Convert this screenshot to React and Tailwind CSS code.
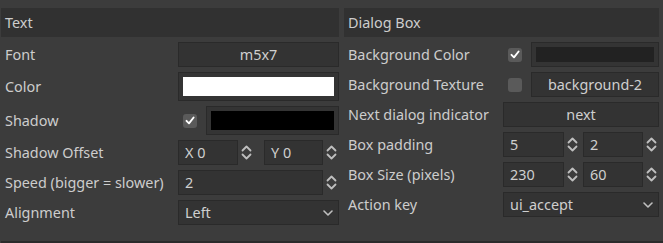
import React from 'react';

const font = { fontFamily: '"Noto Sans", "Open Sans", sans-serif' };

const Arrows = () => (
  <div className="w-[16px] h-full flex items-center justify-center">
    <svg width="11" height="15" viewBox="0 0 11 15" fill="none">
      <path d="M1.5 5.5 L5.5 1.5 L9.5 5.5" stroke="#bfbfbf" strokeWidth="1.8" strokeLinecap="round" strokeLinejoin="round" />
      <path d="M1.5 9.5 L5.5 13.5 L9.5 9.5" stroke="#bfbfbf" strokeWidth="1.8" strokeLinecap="round" strokeLinejoin="round" />
    </svg>
  </div>
);

const Spin = ({ value, width }) => (
  <div className="flex h-[25px]" style={{ width }}>
    <div className="flex-1 flex items-center pl-[6px] bg-[#333333] border border-[#2a2a2a] text-[#cfcfcf]">{value}</div>
    <Arrows />
  </div>
);

const Field = ({ children, center }) => (
  <div className={`h-[25px] w-full flex items-center bg-[#333333] border border-[#2a2a2a] text-[#cfcfcf] ${center ? 'justify-center' : 'pl-[6px]'}`}>
    {children}
  </div>
);

const Select = ({ value }) => (
  <div className="h-[25px] w-full flex items-center justify-between pl-[6px] pr-[5px] bg-[#333333] border border-[#2a2a2a] text-[#cfcfcf]">
    <span>{value}</span>
    <svg width="10" height="6" viewBox="0 0 10 6" fill="none">
      <path d="M1 1 L5 5 L9 1" stroke="#bfbfbf" strokeWidth="1.6" strokeLinecap="round" strokeLinejoin="round" />
    </svg>
  </div>
);

const Check = ({ checked }) => (
  <div className="w-[14px] h-[14px] rounded-[3px] bg-[#5a5a5a] flex items-center justify-center">
    {checked && (
      <svg width="10" height="9" viewBox="0 0 10 9" fill="none">
        <path d="M1.5 4.8 L4 7.3 L8.6 1.5" stroke="#ffffff" strokeWidth="1.9" strokeLinecap="round" strokeLinejoin="round" />
      </svg>
    )}
  </div>
);

const ColorBox = ({ color, h }) => (
  <div className={`flex-1 ${h} p-[4px] bg-[#343434] border border-[#2a2a2a]`}>
    <div className="w-full h-full" style={{ background: color }} />
  </div>
);

const Row = ({ label, labelW, children, h = 'h-[25px]' }) => (
  <div className={`flex items-center ${h}`}>
    <div className="shrink-0 pl-[4px] text-[#cdcdcd] whitespace-nowrap" style={{ width: labelW }}>{label}</div>
    <div className="flex-1 flex items-center h-full">{children}</div>
  </div>
);

const Header = ({ title }) => (
  <div className="h-[29px] bg-[#313131] flex items-center pl-[4px] text-[#cdcdcd]">{title}</div>
);

export default function App() {
  return (
    <div className="w-[663px] h-[243px] bg-[#3c3c3c] flex flex-col text-[14.4px]" style={font}>
      <div className="flex-1 flex gap-[5px] pt-[8px] pl-[1px] pr-[4px]">
        <div className="w-[338px] flex flex-col gap-[5px]">
          <Header title="Text" />
          <Row label="Font" labelW={177}><Field center>m5x7</Field></Row>
          <Row label="Color" labelW={177} h="h-[29px]"><ColorBox color="#ffffff" h="h-[29px]" /></Row>
          <Row label="Shadow" labelW={177} h="h-[29px]">
            <div className="w-[28px] pl-[5px]"><Check checked /></div>
            <ColorBox color="#000000" h="h-[29px]" />
          </Row>
          <Row label="Shadow Offset" labelW={177}>
            <Spin value="X 0" width={76} />
            <div className="w-[10px]" />
            <Spin value="Y 0" width={75} />
          </Row>
          <Row label="Speed (bigger = slower)" labelW={177}><Spin value="2" width={161} /></Row>
          <Row label="Alignment" labelW={177}><Select value="Left" /></Row>
        </div>
        <div className="flex-1 flex flex-col gap-[5px]">
          <Header title="Dialog Box" />
          <Row label="Background Color" labelW={159}>
            <div className="w-[28px] pl-[5px]"><Check checked /></div>
            <ColorBox color="#222222" h="h-[25px]" />
          </Row>
          <Row label="Background Texture" labelW={159}>
            <div className="w-[28px] pl-[5px]"><Check /></div>
            <div className="flex-1"><Field center>background-2</Field></div>
          </Row>
          <Row label="Next dialog indicator" labelW={159}><Field center>next</Field></Row>
          <Row label="Box padding" labelW={159}>
            <Spin value="5" width={77} />
            <div className="w-[3px]" />
            <Spin value="2" width={76} />
          </Row>
          <Row label="Box Size (pixels)" labelW={159}>
            <Spin value="230" width={77} />
            <div className="w-[3px]" />
            <Spin value="60" width={76} />
          </Row>
          <Row label="Action key" labelW={159}><Select value="ui_accept" /></Row>
        </div>
      </div>
      <div className="h-[2px] ml-[1px] bg-[#2b2b2b]" />
    </div>
  );
}
